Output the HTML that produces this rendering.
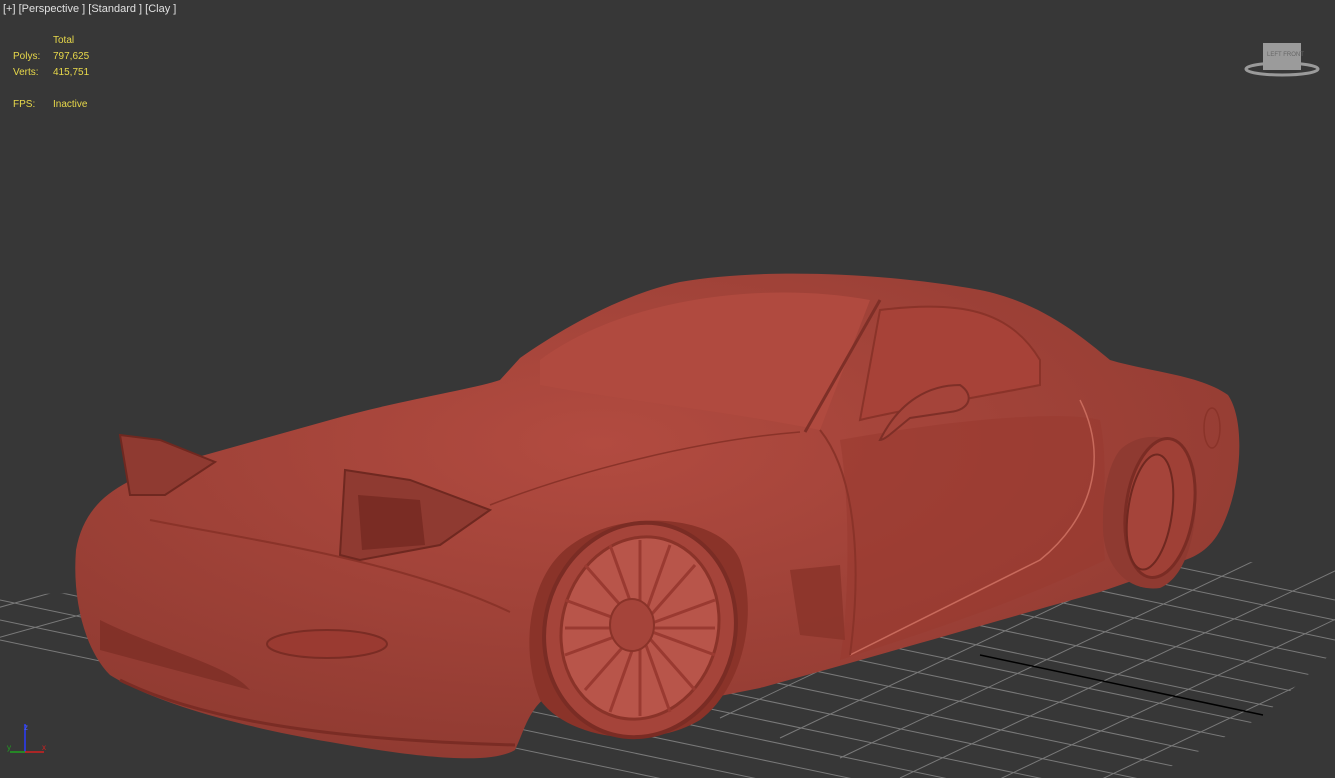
<!DOCTYPE html>
<html><head><meta charset="utf-8"><style>
html,body{margin:0;padding:0;background:#373737;width:1335px;height:778px;overflow:hidden;font-family:"Liberation Sans",sans-serif;position:relative}
.t{position:absolute;font-size:11px;color:#e0e0e0;white-space:pre;line-height:13px}
.y{position:absolute;font-size:10px;color:#e8d94a;line-height:12px}
</style></head><body>
<svg width="1335" height="778" style="position:absolute;left:0;top:0">
<defs>
<clipPath id="g"><polygon points="0,595 1335,560 1335,650 1263,716 1150,778 0,778"/></clipPath>
<radialGradient id="b" cx="0.45" cy="0.35" r="0.7"><stop offset="0" stop-color="#b24b40"/><stop offset="1" stop-color="#8f3a31"/></radialGradient>
</defs>
<g clip-path="url(#g)" stroke="#8a8a8a" stroke-width="1" opacity="0.8">
<line x1="0" y1="520" x2="1335" y2="800"/>
<line x1="0" y1="540" x2="1335" y2="820"/>
<line x1="0" y1="560" x2="1335" y2="840"/>
<line x1="0" y1="580" x2="1335" y2="860"/>
<line x1="0" y1="600" x2="1335" y2="880"/>
<line x1="0" y1="620" x2="1335" y2="900"/>
<line x1="0" y1="640" x2="1335" y2="920"/>
<line x1="0" y1="440" x2="1335" y2="720"/>
<line x1="0" y1="460" x2="1335" y2="740"/>
<line x1="0" y1="480" x2="1335" y2="760"/>
<line x1="0" y1="500" x2="1335" y2="780"/>
<line x1="0" y1="420" x2="1335" y2="700"/>
<line x1="0" y1="400" x2="1335" y2="680"/>
<line x1="0" y1="380" x2="1335" y2="660"/>
<line x1="0" y1="360" x2="1335" y2="640"/>
<line x1="0" y1="340" x2="1335" y2="620"/>
<line x1="0" y1="320" x2="1335" y2="600"/>
<line x1="1400" y1="540" x2="900" y2="778"/>
<line x1="1460" y1="560" x2="960" y2="798"/>
<line x1="1520" y1="580" x2="1020" y2="818"/>
<line x1="1340" y1="520" x2="840" y2="758"/>
<line x1="1280" y1="500" x2="780" y2="738"/>
<line x1="1220" y1="480" x2="720" y2="718"/>
<line x1="1160" y1="460" x2="660" y2="698"/>
<line x1="600" y1="470" x2="-10" y2="640"/>
<line x1="560" y1="450" x2="-10" y2="610"/>
</g>
<line x1="980" y1="655" x2="1263" y2="715" stroke="#000" stroke-width="1.5"/>
<!-- body -->
<path d="M520,358 C560,330 620,295 680,282 C760,268 880,272 980,290 C1040,302 1080,335 1110,360 C1150,372 1200,375 1228,395 C1245,420 1242,480 1225,520 C1215,545 1200,555 1185,560 C1150,575 1120,585 1100,592 C1000,620 880,655 760,688 L700,700 L560,690 C530,700 525,730 515,750 C490,765 420,758 330,742 C230,725 150,700 110,675 C85,650 72,600 76,550 C85,500 120,480 180,462 L330,420 C400,400 470,390 500,380 Z" fill="url(#b)"/>
<path d="M840,440 C950,420 1060,410 1100,420 C1110,470 1100,520 1105,560 C1000,610 900,640 840,660 C850,600 850,500 840,440Z" fill="#9a3a31" opacity="0.6"/>
<path d="M540,360 C620,300 760,280 870,300 L820,430 C720,410 620,400 540,385Z" fill="#b04a3f"/>
<path d="M880,310 C960,300 1010,310 1040,360 L1040,385 C990,395 900,410 860,420 Z" fill="#a74238" stroke="#8a3329" stroke-width="2"/>
<!-- rear wheel -->
<path d="M1120,450 C1140,430 1185,430 1195,470 C1200,520 1190,575 1160,588 C1130,592 1105,570 1103,530 C1102,495 1108,465 1120,450Z" fill="#8f3a31"/>
<ellipse cx="1160" cy="508" rx="34" ry="70" transform="rotate(8 1160 508)" fill="#9f4036" stroke="#7a2c24" stroke-width="3"/>
<ellipse cx="1150" cy="512" rx="22" ry="58" transform="rotate(8 1150 512)" fill="#a5443a" stroke="#6f2820" stroke-width="2"/>
<ellipse cx="1212" cy="428" rx="8" ry="20" fill="none" stroke="#8a3329" stroke-width="1.5"/>
<path d="M805,432 L880,300" stroke="#7e2f27" stroke-width="3" fill="none"/>
<path d="M1080,400 C1110,460 1090,520 1040,560 C960,600 880,640 850,655" stroke="#c86a5c" stroke-width="1.5" fill="none"/>
<path d="M820,430 C860,480 860,580 850,655" stroke="#8a3329" stroke-width="2" fill="none"/>
<path d="M150,520 C250,540 400,560 510,612" stroke="#8a3329" stroke-width="2" fill="none"/>
<path d="M490,505 C580,470 700,440 800,432" stroke="#8a3329" stroke-width="1.5" fill="none"/>
<path d="M880,440 C900,400 930,385 960,385 C975,395 970,410 950,412 L910,418 C895,430 885,440 880,440Z" fill="#a5443a" stroke="#7e2f27" stroke-width="2"/>
<path d="M120,435 L160,440 L215,462 L165,495 L130,495 Z" fill="#8f3a31" stroke="#6f2820" stroke-width="2"/>
<path d="M345,470 L410,480 L490,510 L440,545 L360,560 L340,555 Z" fill="#8f3a31" stroke="#6f2820" stroke-width="2"/>
<path d="M358,495 L420,500 L425,545 L362,550 Z" fill="#7a2c24"/>
<path d="M100,620 C160,650 230,665 250,690 L100,650Z" fill="#7a2c24" opacity="0.7"/>
<ellipse cx="327" cy="644" rx="60" ry="14" fill="#9a3a31" stroke="#7a2c24" stroke-width="2"/>
<path d="M120,680 C200,720 330,740 515,745" stroke="#7a2c24" stroke-width="3" fill="none"/>
<path d="M790,570 L840,565 L845,640 L800,635 Z" fill="#8a3329" opacity="0.8"/>
<!-- front wheel -->
<path d="M555,560 C600,505 720,510 740,560 C760,620 740,690 700,720 C650,750 570,740 540,700 C520,650 530,590 555,560Z" fill="#8a3329"/>
<ellipse cx="640" cy="630" rx="95" ry="108" transform="rotate(15 640 630)" fill="#a5443a" stroke="#7a2c24" stroke-width="4"/>
<ellipse cx="640" cy="628" rx="78" ry="92" transform="rotate(15 640 628)" fill="#b8554a" stroke="#8a3329" stroke-width="3"/>
<g stroke="#9a3a31" stroke-width="3">
<line x1="640" y1="540" x2="640" y2="716"/><line x1="565" y1="628" x2="715" y2="628"/>
<line x1="585" y1="565" x2="695" y2="690"/><line x1="695" y1="565" x2="585" y2="690"/>
<line x1="610" y1="545" x2="670" y2="712"/><line x1="670" y1="545" x2="610" y2="712"/>
<line x1="565" y1="600" x2="715" y2="655"/><line x1="565" y1="655" x2="715" y2="600"/>
</g>
<ellipse cx="632" cy="625" rx="22" ry="26" fill="#a5443a" stroke="#8a3329" stroke-width="2"/>
<line x1="25" y1="752" x2="25" y2="724" stroke="#2a3cff" stroke-width="1.5"/>
<line x1="25" y1="752" x2="44" y2="752" stroke="#d02020" stroke-width="1.5"/>
<line x1="10" y1="752" x2="25" y2="752" stroke="#20a020" stroke-width="1.5"/>
<text x="24" y="730" font-size="8" fill="#4a5cff" font-family="Liberation Sans">z</text>
<text x="42" y="750" font-size="8" fill="#d02020" font-family="Liberation Sans">x</text>
<text x="7" y="750" font-size="8" fill="#20a020" font-family="Liberation Sans">y</text>
<ellipse cx="1282" cy="69" rx="36" ry="6" fill="none" stroke="#9a9a9a" stroke-width="3"/>
<rect x="1263" y="43" width="38" height="27" fill="#9b9b9b"/>
<text x="1267" y="56" font-size="6" fill="#666" font-family="Liberation Sans">LEFT FRONT</text>
</svg>
<div class="t" style="left:3px;top:3px">[+] [Perspective ] [Standard ] [Clay ]</div>
<div class="y" style="left:53px;top:35px">Total</div>
<div class="y" style="left:13px;top:51px">Polys:</div><div class="y" style="left:53px;top:51px">797,625</div>
<div class="y" style="left:13px;top:67px">Verts:</div><div class="y" style="left:53px;top:67px">415,751</div>
<div class="y" style="left:13px;top:99px">FPS:</div><div class="y" style="left:53px;top:99px">Inactive</div>
</body></html>
